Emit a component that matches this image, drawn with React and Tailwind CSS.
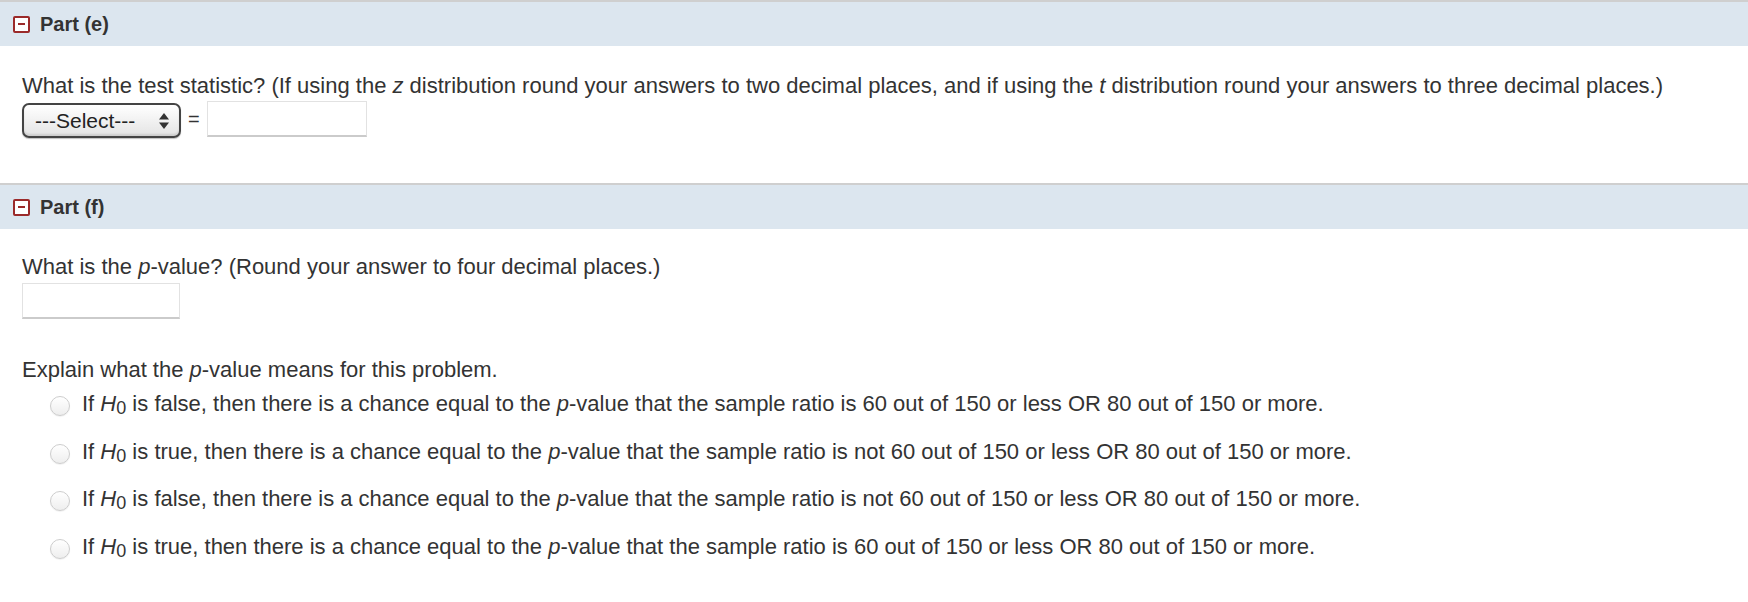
import React from 'react';

const MinusBox = () => (
    <span className="inline-flex items-center justify-center w-[17px] h-[17px] border-2 border-[#9b2a2a] rounded-[2px] bg-white shrink-0">
        <span className="block w-[7px] h-[2px] bg-[#9b2a2a]" />
    </span>
);

const PartHeader = ({ label }) => (
    <div className="border-t-2 border-[#cfcfcf] bg-[#dce6ef] h-[46px] flex items-center gap-[10px] pl-[13px]">
        <MinusBox />
        <span className="font-bold text-[20px] text-[#333]">{label}</span>
    </div>
);

const SelectBox = () => (
    <div className="w-[159px] h-[35px] mt-[2px] rounded-[7px] border-2 border-[#444] bg-gradient-to-b from-white to-[#e4e4e4] shadow-[inset_0_-2px_2px_rgba(0,0,0,0.1),0_1px_1px_rgba(0,0,0,0.25)] flex items-center justify-between pl-[11px] pr-[9px]">
        <span className="text-[21px] text-[#222]">---Select---</span>
        <svg width="12" height="18" viewBox="0 0 12 18">
            <path d="M6 1 L11 7.5 L1 7.5 Z" fill="#333" />
            <path d="M6 17 L11 10.5 L1 10.5 Z" fill="#333" />
        </svg>
    </div>
);

const TextInput = ({ w }) => (
    <div className={`${w} h-[36px] bg-white border border-[#e2e2e2] border-b-2 border-b-[#cbcbcb]`} />
);

const H0 = () => (
    <span>
        <i>H</i>
        <span className="text-[18px] leading-none align-[-3px]">0</span>
    </span>
);

const options = [
    ['false', 'is'],
    ['true', 'is not'],
    ['false', 'is not'],
    ['true', 'is'],
];

const Radio = () => (
    <span className="w-[20px] h-[20px] mt-[5px] rounded-full border border-[#cdcdcd] bg-gradient-to-b from-white to-[#eeeeee] shadow-[0_1px_1px_rgba(0,0,0,0.06)] shrink-0" />
);

export default function App() {
    return (
        <div className="w-[1748px] h-[602px] bg-white text-[#333] text-[22px] font-['Liberation_Sans',Arial,sans-serif] leading-[25px] overflow-hidden">
            <PartHeader label="Part (e)" />
            <div className="pl-[22px] pt-[27px] pb-[45px]">
                <p>
                    What is the test statistic? (If using the <i>z</i> distribution round your answers to two decimal places, and if using the <i>t</i> distribution round your answers to three decimal places.)
                </p>
                <div className="flex items-start mt-[3px]">
                    <SelectBox />
                    <span className="mx-[7px] mt-[6px] text-[20px]">=</span>
                    <TextInput w="w-[160px]" />
                </div>
            </div>
            <PartHeader label="Part (f)" />
            <div className="pl-[22px] pt-[25px]">
                <p>
                    What is the <i>p</i>-value? (Round your answer to four decimal places.)
                </p>
                <div className="mt-[4px]">
                    <TextInput w="w-[158px]" />
                </div>
                <p className="mt-[38px]">
                    Explain what the <i>p</i>-value means for this problem.
                </p>
                <div className="pl-[28px] flex flex-col gap-[22.6px] mt-[9px]">
                    {options.map(([truth, isPart], i) => (
                        <div key={i} className="flex items-start gap-[12px] h-[25px]">
                            <Radio />
                            <span>
                                If <H0 /> is {truth}, then there is a chance equal to the <i>p</i>-value that the sample ratio {isPart} 60 out of 150 or less OR 80 out of 150 or more.
                            </span>
                        </div>
                    ))}
                </div>
            </div>
        </div>
    );
}
